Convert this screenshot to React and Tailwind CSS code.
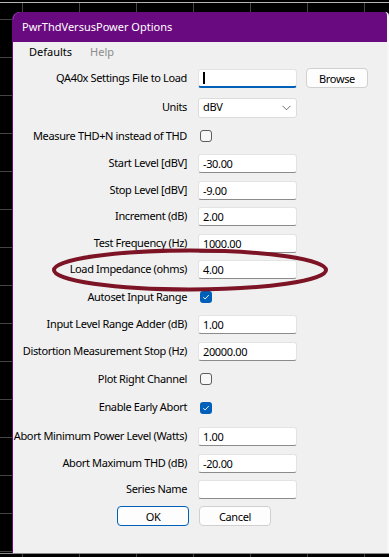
const rows = [
  { label: 'QA40x Settings File to Load', kind: 'file', h: 'h-[30px]' },
  { label: 'Units', kind: 'select', value: 'dBV', h: 'h-[29px]' },
  { label: 'Measure THD+N instead of THD', kind: 'check', checked: false, h: 'h-[28px]' },
  { label: 'Start Level [dBV]', kind: 'text', value: '-30.00', h: 'h-[27px]' },
  { label: 'Stop Level [dBV]', kind: 'text', value: '-9.00', h: 'h-[26px]' },
  { label: 'Increment (dB)', kind: 'text', value: '2.00', h: 'h-[27px]' },
  { label: 'Test Frequency (Hz)', kind: 'text', value: '1000.00', h: 'h-[26px]' },
  { label: 'Load Impedance (ohms)', kind: 'text', value: '4.00', h: 'h-[27px]' },
  { label: 'Autoset Input Range', kind: 'check', checked: true, h: 'h-[28px]' },
  { label: 'Input Level Range Adder (dB)', kind: 'text', value: '1.00', h: 'h-[27px]' },
  { label: 'Distortion Measurement Stop (Hz)', kind: 'text', value: '20000.00', h: 'h-[27px]' },
  { label: 'Plot Right Channel', kind: 'check', checked: false, h: 'h-[28px]' },
  { label: 'Enable Early Abort', kind: 'check', checked: true, h: 'h-[29px]' },
  { label: 'Abort Minimum Power Level (Watts)', kind: 'text', value: '1.00', h: 'h-[28px]' },
  { label: 'Abort Maximum THD (dB)', kind: 'text', value: '-20.00', h: 'h-[26px]' },
  { label: 'Series Name', kind: 'text', value: '', h: 'h-[26px]' },
]

const TextBox = ({ value }) => (
  <div className="flex h-[19px] w-[99px] items-center rounded-[3px] border border-[#e3e3e3] border-b-[#8b8b8b] bg-white pl-[4px] leading-none">
    {value}
  </div>
)

const Check = ({ checked }) =>
  checked ? (
    <div className="ml-[2px] flex h-[12px] w-[12px] items-center justify-center rounded-[3px] bg-[#005fb8]">
      <svg width="8" height="8" viewBox="0 0 8 8" fill="none">
        <path d="M1.2 4.2 L3.1 6 L6.8 2" stroke="white" strokeWidth="0.9" />
      </svg>
    </div>
  ) : (
    <div className="ml-[2px] h-[12px] w-[12px] rounded-[3px] border border-[#5c5c5c] bg-[#f7f7f7]" />
  )

const Control = ({ row }) => {
  if (row.kind === 'file') {
    return (
      <div className="flex items-center">
        <div className="flex h-[19px] w-[99px] items-center rounded-[3px] border border-[#e3e3e3] border-b-2 border-b-[#005fb8] bg-white pl-[4px]">
          <div className="h-[12px] w-[2px] bg-black" />
        </div>
        <button className="ml-[9px] h-[20px] w-[62px] rounded-[4px] border border-[#d0d0d0] bg-[#fdfdfd] leading-none">
          Browse
        </button>
      </div>
    )
  }
  if (row.kind === 'select') {
    return (
      <div className="flex h-[20px] w-[99px] items-center justify-between rounded-[3px] border border-[#dcdcdc] bg-white pl-[4px] pr-[5px]">
        <span>{row.value}</span>
        <svg width="9" height="6" viewBox="0 0 9 6" fill="none">
          <path d="M0.5 0.8 L4.5 4.8 L8.5 0.8" stroke="#606060" strokeWidth="0.9" />
        </svg>
      </div>
    )
  }
  if (row.kind === 'check') return <Check checked={row.checked} />
  return <TextBox value={row.value} />
}

export default function App() {
  return (
    <div className="h-[557px] w-[389px] overflow-hidden bg-black bg-[linear-gradient(#444_1px,transparent_1px),linear-gradient(90deg,#444_1px,transparent_1px)] bg-[size:57px_38px] bg-[position:22px_19px] font-['Noto_Sans',sans-serif] text-[11px] tracking-[-0.36px] text-black">
      <div className="h-[2px] bg-black" />
      <div className="h-[1px] bg-[#b5b5b5]" />
      <div className="ml-[12px] mt-[9px] flex h-[541px] flex-col overflow-hidden rounded-tl-[8px] rounded-tr-[4px] border-l border-r-2 border-l-[#6a0a80] border-r-[#f7f7f7] bg-[#f0f0f0]">
        <div className="flex h-[30px] shrink-0 items-center bg-[#6a0a80] pl-[9px] text-[11px] tracking-normal text-white">
          PwrThdVersusPower Options
        </div>
        <div className="flex h-[21px] shrink-0 items-center pl-[16px] text-[11px] tracking-normal">
          <span>Defaults</span>
          <span className="ml-[18px] text-[#8c8c8c]">Help</span>
        </div>
        <div className="relative">
          {rows.map((row) => (
            <div key={row.label} className={`flex items-center ${row.h}`}>
              <div className="w-[174px] shrink-0 whitespace-nowrap text-right">{row.label}</div>
              <div className="ml-[11px]">
                <Control row={row} />
              </div>
            </div>
          ))}
          <svg
            className="pointer-events-none absolute left-[38px] top-[184px]"
            width="280"
            height="46"
            viewBox="0 0 280 46"
            fill="none"
          >
            <ellipse cx="139" cy="23" rx="136" ry="19.5" stroke="#7c1426" strokeWidth="4" />
          </svg>
        </div>
        <div className="flex h-[28px] items-center pl-[104px]">
          <button className="h-[20px] w-[72px] rounded-[4px] border-[1.5px] border-[#005fb8] bg-[#fdfdfd] leading-none">
            OK
          </button>
          <button className="ml-[10px] h-[20px] w-[72px] rounded-[4px] border border-[#d0d0d0] bg-[#fdfdfd] leading-none">
            Cancel
          </button>
        </div>
      </div>
      <div className="h-[1px] bg-[#8a8a8a]" />
    </div>
  )
}
